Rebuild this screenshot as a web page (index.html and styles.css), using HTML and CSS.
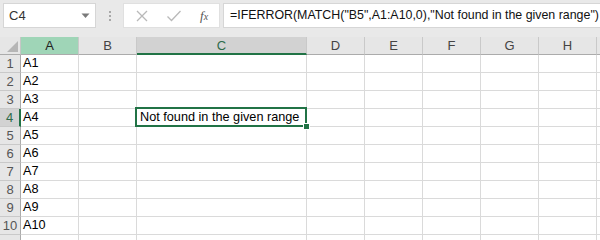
FILE: index.html
```html
<!DOCTYPE html>
<html>
<head>
<meta charset="utf-8">
<link rel="stylesheet" href="styles.css">
</head>
<body>
<div class="fbar">
  <div class="namebox"><span class="nb-text">C4</span><svg class="nb-arrow" width="9" height="6" viewBox="0 0 9 6"><path d="M0.5 0.5h8L4.5 5z" fill="#7a7a7a"/></svg></div>
  <div class="dots"><i></i><i></i><i></i></div>
  <div class="iconbox">
    <svg class="ico" width="14" height="14" viewBox="0 0 14 14"><path d="M2 2L12 12M12 2L2 12" stroke="#b9b9b9" stroke-width="1.3" fill="none"/></svg>
    <svg class="ico" width="16" height="14" viewBox="0 0 16 14"><path d="M1.5 7.5L5.5 11.5L14.5 2" stroke="#b9b9b9" stroke-width="1.3" fill="none"/></svg>
    <span class="fx"><i>f</i><span>x</span></span>
  </div>
  <div class="formula">=IFERROR(MATCH("B5",A1:A10,0),"Not found in the given range")</div>
</div>
<div class="sheet">
  <div class="corner"><span class="tri"></span></div>
  <div class="ch chA">A</div>
  <div class="ch">B</div>
  <div class="ch chC">C</div>
  <div class="ch">D</div>
  <div class="ch">E</div>
  <div class="ch">F</div>
  <div class="ch">G</div>
  <div class="ch">H</div>
  <div class="ch last"></div>

  <div class="rh">1</div><div class="c">A1</div><div class="c"></div><div class="c"></div><div class="c"></div><div class="c"></div><div class="c"></div><div class="c"></div><div class="c"></div><div class="c"></div>
  <div class="rh">2</div><div class="c">A2</div><div class="c"></div><div class="c"></div><div class="c"></div><div class="c"></div><div class="c"></div><div class="c"></div><div class="c"></div><div class="c"></div>
  <div class="rh">3</div><div class="c">A3</div><div class="c"></div><div class="c"></div><div class="c"></div><div class="c"></div><div class="c"></div><div class="c"></div><div class="c"></div><div class="c"></div>
  <div class="rh rh4">4</div><div class="c">A4</div><div class="c"></div><div class="c sel">Not found in the given range<span class="handle"></span></div><div class="c"></div><div class="c"></div><div class="c"></div><div class="c"></div><div class="c"></div><div class="c"></div>
  <div class="rh">5</div><div class="c">A5</div><div class="c"></div><div class="c"></div><div class="c"></div><div class="c"></div><div class="c"></div><div class="c"></div><div class="c"></div><div class="c"></div>
  <div class="rh">6</div><div class="c">A6</div><div class="c"></div><div class="c"></div><div class="c"></div><div class="c"></div><div class="c"></div><div class="c"></div><div class="c"></div><div class="c"></div>
  <div class="rh">7</div><div class="c">A7</div><div class="c"></div><div class="c"></div><div class="c"></div><div class="c"></div><div class="c"></div><div class="c"></div><div class="c"></div><div class="c"></div>
  <div class="rh">8</div><div class="c">A8</div><div class="c"></div><div class="c"></div><div class="c"></div><div class="c"></div><div class="c"></div><div class="c"></div><div class="c"></div><div class="c"></div>
  <div class="rh">9</div><div class="c">A9</div><div class="c"></div><div class="c"></div><div class="c"></div><div class="c"></div><div class="c"></div><div class="c"></div><div class="c"></div><div class="c"></div>
  <div class="rh">10</div><div class="c">A10</div><div class="c"></div><div class="c"></div><div class="c"></div><div class="c"></div><div class="c"></div><div class="c"></div><div class="c"></div><div class="c"></div>
  <div class="rh"></div><div class="c"></div><div class="c"></div><div class="c"></div><div class="c"></div><div class="c"></div><div class="c"></div><div class="c"></div><div class="c"></div><div class="c"></div>
</div>
</body>
</html>
```
FILE: styles.css
```css
html, body {
  margin: 0;
  padding: 0;
  background: #ffffff;
  width: 600px;
  height: 240px;
  overflow: hidden;
  font-family: "Liberation Sans", Arial, sans-serif;
}
.fbar {
  height: 37px;
  box-sizing: border-box;
  background: #e9e9e9;
  display: flex;
  align-items: flex-start;
  padding: 3px 0 0 3px;
}
.namebox {
  width: 93px;
  height: 25px;
  box-sizing: border-box;
  background: #fff;
  border: 1px solid #d6d6d6;
  display: flex;
  align-items: center;
  justify-content: space-between;
  padding: 0 5px 0 5px;
}
.nb-text {
  font-size: 13px;
  color: #333;
}
.nb-arrow { margin-top: 1px; }
.dots {
  width: 27px;
  height: 25px;
  display: flex;
  flex-direction: column;
  align-items: center;
  justify-content: center;
  gap: 2px;
}
.dots i {
  width: 2px;
  height: 2px;
  background: #a8a8a8;
  display: block;
}
.iconbox {
  width: 97px;
  height: 25px;
  box-sizing: border-box;
  background: #fff;
  border: 1px solid #e0e0e0;
  display: flex;
  align-items: center;
  padding-left: 11px;
  gap: 17px;
}
.fx {
  font-family: "Liberation Serif", serif;
  font-size: 13px;
  color: #555;
  margin-left: 1px;
}
.fx i { font-style: italic; }
.fx span { font-size: 10px; font-style: italic; }
.formula {
  flex: 1;
  height: 25px;
  box-sizing: border-box;
  margin-left: 3px;
  background: #fff;
  border: 1px solid #d6d6d6;
  border-right: none;
  font-size: 12.4px;
  color: #111;
  line-height: 23px;
  padding-left: 6px;
  white-space: nowrap;
  overflow: hidden;
}
.sheet {
  display: grid;
  grid-template-columns: 21px 58px 58px 170px 58px 58px 58px 58px 58px 20px;
  grid-auto-rows: 18px;
  font-size: 13px;
  height: 203px;
  overflow: hidden;
}
.corner {
  background: #e6e6e6;
  border-right: 1px solid #c6c6c6;
  border-bottom: 1px solid #ababab;
  box-sizing: border-box;
  position: relative;
}
.tri {
  position: absolute;
  right: 2px;
  bottom: 2px;
  width: 0;
  height: 0;
  border-left: 11px solid transparent;
  border-bottom: 11px solid #b6b6b6;
}
.ch {
  background: #e6e6e6;
  border-right: 1px solid #c9c9c9;
  border-bottom: 1px solid #ababab;
  box-sizing: border-box;
  text-align: center;
  line-height: 17px;
  color: #444;
  font-size: 13px;
}
.chA {
  background: #9fd5b7;
  color: #222;
}
.chC {
  background: #d2d2d2;
  border-bottom: 2px solid #217346;
  color: #2e6b4a;
}
.ch.last { border-right: none; }
.rh {
  background: #e6e6e6;
  border-right: 1px solid #ababab;
  border-bottom: 1px solid #c9c9c9;
  box-sizing: border-box;
  text-align: center;
  line-height: 17px;
  color: #555;
  font-size: 13px;
}
.rh4 {
  background: #d2d2d2;
  border-right: 2px solid #217346;
  color: #2e6b4a;
}
.c {
  border-right: 1px solid #dadada;
  border-bottom: 1px solid #dadada;
  box-sizing: border-box;
  line-height: 17px;
  padding-left: 2px;
  color: #000;
  white-space: nowrap;
  font-size: 12.7px;
}
.sel {
  position: relative;
  padding-left: 3px;
}
.sel::after {
  content: "";
  position: absolute;
  left: -2px;
  top: -2px;
  right: -1px;
  bottom: -1px;
  border: 2px solid #217346;
}
.handle {
  position: absolute;
  right: -4px;
  bottom: -4px;
  width: 5px;
  height: 5px;
  background: #217346;
  border: 1px solid #fff;
  z-index: 2;
}
```
